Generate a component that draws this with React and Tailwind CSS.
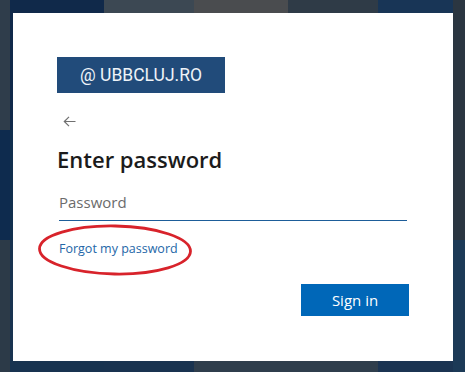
import React from 'react'

const tiles = [
  '#2f3d4b', '#10294a', '#3c4853', '#4a4c4f', '#2f3b47', '#183556', '#2b3641',
  '#0e2b4e', '#12304f', '#2c3a48', '#3a4048', '#2e3a46', '#1b3854', '#2b3641',
  '#2c3a48', '#183350', '#193350', '#2f3e4c', '#2f3e4c', '#1b3452', '#1c3a57',
]

const App = () => {
  return (
    <div className="relative h-[372px] w-[465px] overflow-hidden bg-[#1b3452]">
      {/* background tiles */}
      <div className="absolute inset-0 grid grid-cols-[10px_94px_90px_94px_90px_75px_12px] grid-rows-[130px_110px_132px]">
        {tiles.map((c, i) => (
          <div key={i} style={{ backgroundColor: c }} />
        ))}
      </div>

      <div className="relative p-[13px] pr-[12px]">
        <div
          className="relative flex flex-col bg-white px-[44px] pt-[44px] pb-[45px]"
          style={{ fontFamily: '"Open Sans", "Noto Sans", sans-serif' }}
        >
          {/* org badge */}
          <div className="flex h-9 w-[168px] items-center justify-center bg-[#214b7a]">
            <span
              className="text-[17.5px] text-[#eef3f8]"
              style={{ fontFamily: 'Roboto, sans-serif' }}
            >
              @ UBBCLUJ.RO
            </span>
          </div>

          {/* back arrow */}
          <div className="mt-[21px] flex h-[14px] items-center pl-[6px]">
            <svg width="13" height="11" viewBox="0 0 13 11" fill="none" stroke="#707070" strokeWidth="1.2" className="shrink-0">
              <path d="M12.5 5.5H1.3M6 0.8L1.3 5.5L6 10.2" />
            </svg>
          </div>

          <h1 className="mt-[17px] text-[22px] leading-[28px] font-semibold text-[#1b1b1b]">Enter password</h1>

          <input
            type="password"
            placeholder="Password"
            className="mt-[11px] ml-[2px] h-[37px] w-[348px] border-b border-[#1d5d99] bg-transparent px-0 text-[15px] text-[#1b1b1b] outline-none placeholder:text-[#6b6b6b]"
          />

          <div className="mt-4 pl-[2px] leading-5">
            <a href="#" className="text-[12.5px] leading-5 text-[#2467a8]">
              Forgot my password
            </a>
          </div>

          <div className="mt-[25px] flex justify-end">
            <button className="h-8 w-[108px] bg-[#0067b8] text-[15px] text-white">Sign in</button>
          </div>

          {/* red annotation circle */}
          <svg
            className="absolute left-[24px] top-[211px]"
            width="158"
            height="54"
            viewBox="0 0 158 54"
            fill="none"
          >
            <ellipse cx="78" cy="26" rx="75.5" ry="24" stroke="#d8232b" strokeWidth="2.8" transform="rotate(1 78 26)" />
          </svg>
        </div>
      </div>
    </div>
  )
}

export default App
